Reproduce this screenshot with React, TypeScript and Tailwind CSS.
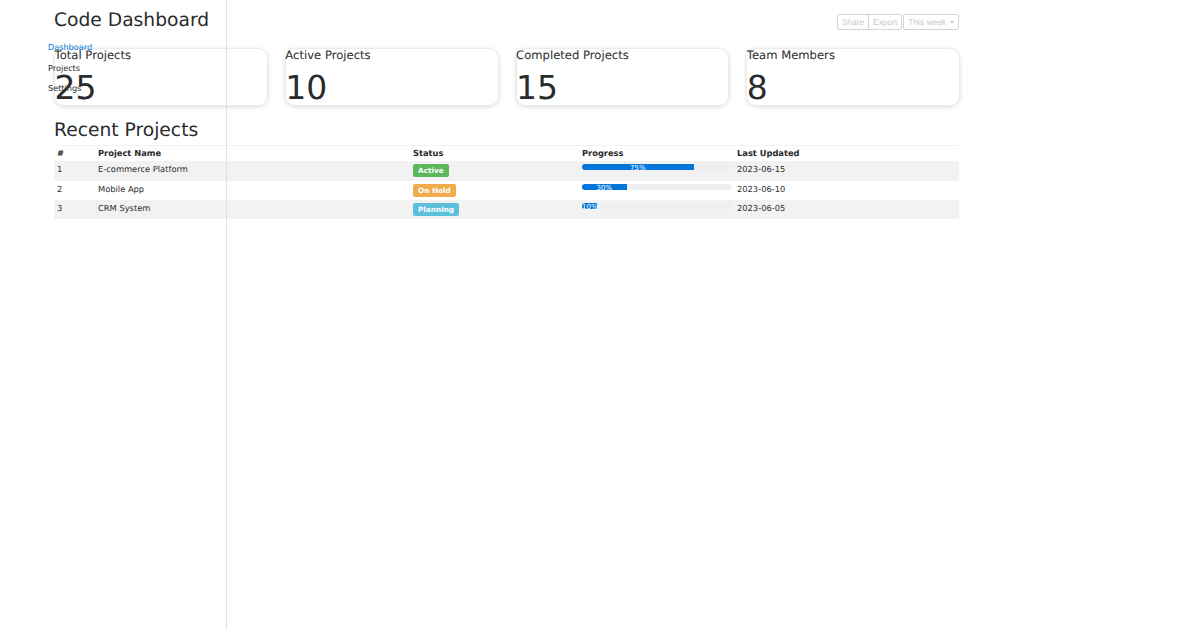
const stats = [
  { label: "Total Projects", value: "25" },
  { label: "Active Projects", value: "10" },
  { label: "Completed Projects", value: "15" },
  { label: "Team Members", value: "8" },
];

const projects = [
  { id: 1, name: "E-commerce Platform", status: "Active", badge: "bg-[#5cb85c]", progress: 75, date: "2023-06-15" },
  { id: 2, name: "Mobile App", status: "On Hold", badge: "bg-[#f0ad4e]", progress: 30, date: "2023-06-10" },
  { id: 3, name: "CRM System", status: "Planning", badge: "bg-[#5bc0de]", progress: 10, date: "2023-06-05" },
];

const font = { fontFamily: "'DejaVu Sans', sans-serif" };

export default function App() {
  return (
    <div className="relative h-[630px] w-[1200px] overflow-hidden bg-white text-[#292b2c] [text-rendering:geometricPrecision]" style={font}>
      {/* sidebar sits over the content */}
      <aside className="absolute left-0 top-0 z-10 h-full w-[227px] border-r border-[#e0e0e0] pl-[48px] pt-[42px] text-[8.15px] leading-[11px]">
        <div className="text-[#0275d8]">Dashboard</div>
        <div className="mt-[9.5px]">Projects</div>
        <div className="mt-[9.5px]">Settings</div>
      </aside>

      <main className="ml-[54px] w-[905px]">
        <div className="flex h-[48px] items-start justify-between">
          <h1 className="pt-[9px] text-[18.7px] leading-[24px]">Code Dashboard</h1>
          <div className="mt-[14px] flex text-[8.4px] leading-[14px] text-[#c9c9c9]" style={{ fontFamily: "'Liberation Sans', sans-serif" }}>
            <span className="rounded-l-[2px] border border-[#d4d4d4] px-[4px]">Share</span>
            <span className="-ml-px rounded-r-[2px] border border-[#d4d4d4] px-[4px]">Export</span>
            <span className="ml-px flex items-center gap-[4px] rounded-[2px] border border-[#d4d4d4] px-[4px]">
              This week
              <span className="h-0 w-0 border-x-[2.5px] border-t-[3px] border-x-transparent border-t-[#c9c9c9]" />
            </span>
          </div>
        </div>

        <div className="grid w-[906px] grid-cols-4 gap-[17px]">
          {stats.map((s) => (
            <div key={s.label} className="h-[58px] rounded-[10px] border border-[#ebebeb] shadow-[0_1px_4px_rgba(0,0,0,0.14)]">
              <div className="-ml-[0.4px] -mt-px text-[11.6px] leading-[14px]">{s.label}</div>
              <div className="-ml-[0.4px] mt-[5px] text-[33px] leading-[41px]">{s.value}</div>
            </div>
          ))}
        </div>

        <h2 className="mt-[13px] text-[18.7px] leading-[24px]">Recent Projects</h2>

        <table className="mt-[2px] w-[905px] table-fixed border-t border-[#f2f2f2] text-[8.32px]">
          <thead>
            <tr className="h-[15.8px] font-bold">
              <th className="w-[41px] pl-[3px] text-left">#</th>
              <th className="w-[315px] pl-[3px] text-left">Project Name</th>
              <th className="w-[169px] pl-[3px] text-left">Status</th>
              <th className="w-[155px] pl-[3px] text-left">Progress</th>
              <th className="pl-[3px] text-left">Last Updated</th>
            </tr>
          </thead>
          <tbody>
            {projects.map((p) => (
              <tr key={p.id} className={p.id % 2 === 1 ? "h-[19.3px] bg-[#f2f2f2]" : "h-[19.3px] bg-white"}>
                <td className="pl-[3px] pb-[3px] align-middle">{p.id}</td>
                <td className="pl-[3px] pb-[3px] align-middle">{p.name}</td>
                <td className="pl-[3px] align-middle">
                  <span className={`inline-block rounded-[2px] px-[5px] text-[7.3px] font-bold leading-[13px] text-white ${p.badge}`}>
                    {p.status}
                  </span>
                </td>
                <td className="pl-[3px] pb-[7px] align-middle">
                  <div className="h-[6px] w-[149px] overflow-hidden rounded-[3px] bg-[#eceeef]">
                    <div
                      className="h-full bg-[#0275d8] text-center text-[7px] leading-[8px] text-white"
                      style={{ width: `${p.progress}%` }}
                    >
                      {p.progress}%
                    </div>
                  </div>
                </td>
                <td className="pl-[3px] pb-[3px] align-middle">{p.date}</td>
              </tr>
            ))}
          </tbody>
        </table>
      </main>
    </div>
  );
}
